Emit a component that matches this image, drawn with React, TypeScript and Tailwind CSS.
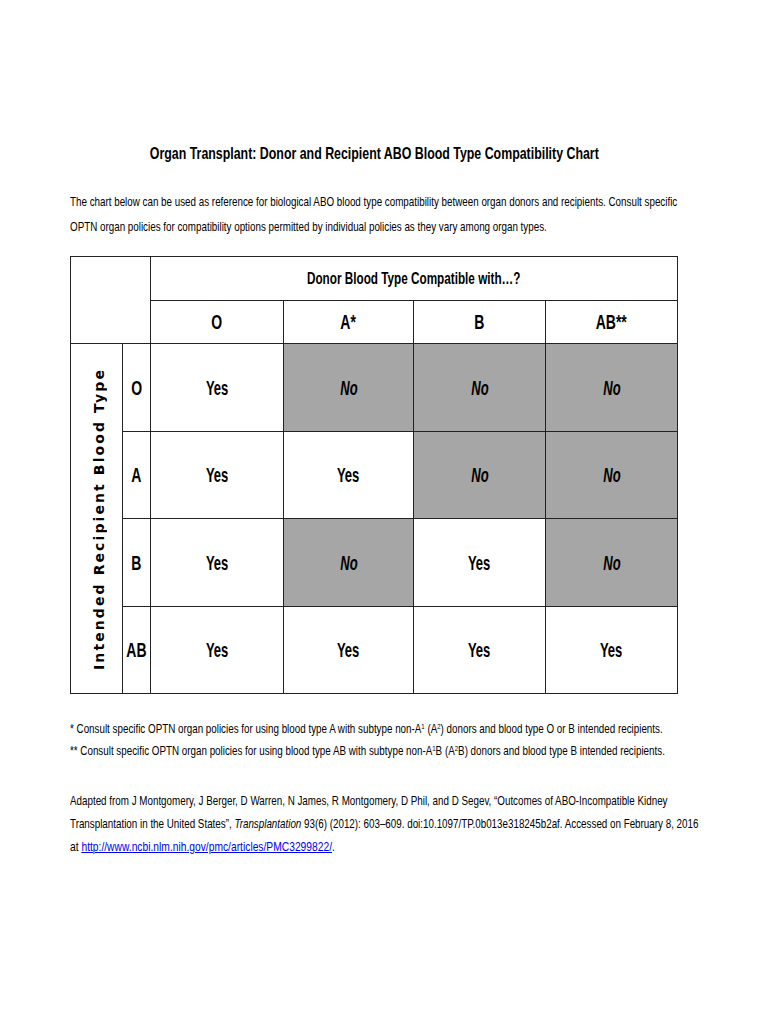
import React from "react";

const rows: { label: string; vals: boolean[] }[] = [
  { label: "O", vals: [true, false, false, false] },
  { label: "A", vals: [true, true, false, false] },
  { label: "B", vals: [true, false, true, false] },
  { label: "AB", vals: [true, true, true, true] },
];

const heads = ["O", "A*", "B", "AB**"];

function Cell({ ok }: { ok: boolean }) {
  return (
    <div
      className={`flex items-center justify-center ${ok ? "bg-white" : "bg-[#a6a6a6]"}`}
    >
      <span
        className={`inline-block whitespace-nowrap text-[21px] font-bold text-black scale-x-[0.62] ${
          ok ? "" : "italic"
        }`}
      >
        {ok ? "Yes" : "No"}
      </span>
    </div>
  );
}

export default function App() {
  return (
    <div className="w-[768px] h-[1024px] bg-white text-black font-['Liberation_Sans',Arial,sans-serif] overflow-hidden">
      <div className="pt-[140px] h-[166px] pr-[20px] leading-[26px] text-center">
        <span className="inline-block whitespace-nowrap text-[16.5px] font-bold scale-x-[0.75]">
          Organ Transplant: Donor and Recipient ABO Blood Type Compatibility Chart
        </span>
      </div>

      <div className="mt-[22.5px] pl-[70px] leading-[25px] text-[13px]">
        <div className="whitespace-nowrap origin-left scale-x-[0.755]">
          The chart below can be used as reference for biological ABO blood type compatibility between organ donors and recipients. Consult specific
        </div>
        <div className="whitespace-nowrap origin-left scale-x-[0.755]">
          OPTN organ policies for compatibility options permitted by individual policies as they vary among organ types.
        </div>
      </div>

      <div className="mt-[17.5px] ml-[70px] w-[608px] grid grid-cols-[51px_27px_132px_129px_131px_131px] grid-rows-[43px_42px_87px_86px_87px_86px] gap-px p-px bg-[#222]">
        <div className="col-span-2 row-span-2 bg-white" />
        <div className="col-span-4 bg-white flex items-center justify-center">
          <span className="inline-block whitespace-nowrap text-[17px] font-bold scale-x-[0.69]">
            Donor Blood Type Compatible with…?
          </span>
        </div>
        {heads.map((h) => (
          <div key={h} className="bg-white flex items-center justify-center">
            <span className="inline-block whitespace-nowrap text-[20px] font-bold scale-x-[0.7]">
              {h}
            </span>
          </div>
        ))}
        <div className="row-span-4 bg-white flex items-center justify-center pl-[5px]">
          <span className="[writing-mode:vertical-rl] rotate-180 whitespace-nowrap font-['DejaVu_Sans',sans-serif] font-bold text-[14px] tracking-[2.1px]">
            Intended Recipient Blood Type
          </span>
        </div>
        {rows.map((r) => (
          <React.Fragment key={r.label}>
            <div className="bg-white flex items-center justify-center">
              <span className="inline-block whitespace-nowrap text-[20px] font-bold scale-x-[0.7]">
                {r.label}
              </span>
            </div>
            {r.vals.map((v, i) => (
              <Cell key={i} ok={v} />
            ))}
          </React.Fragment>
        ))}
      </div>

      <div className="mt-[24px] pl-[70px] leading-[22px] text-[13px]">
        <div className="whitespace-nowrap origin-left scale-x-[0.755]">
          * Consult specific OPTN organ policies for using blood type A with subtype non-A<sup className="text-[8px]">1</sup> (A<sup className="text-[8px]">2</sup>) donors and blood type O or B intended recipients.
        </div>
        <div className="whitespace-nowrap origin-left scale-x-[0.755]">
          ** Consult specific OPTN organ policies for using blood type AB with subtype non-A<sup className="text-[8px]">1</sup>B (A<sup className="text-[8px]">2</sup>B) donors and blood type B intended recipients.
        </div>
      </div>

      <div className="mt-[26.5px] pl-[70px] leading-[23px] text-[13px]">
        <div className="whitespace-nowrap origin-left scale-x-[0.755]">
          Adapted from J Montgomery, J Berger, D Warren, N James, R Montgomery, D Phil, and D Segev, “Outcomes of ABO-Incompatible Kidney
        </div>
        <div className="whitespace-nowrap origin-left scale-x-[0.755]">
          Transplantation in the United States”, <i>Transplantation</i> 93(6) (2012): 603–609. doi:10.1097/TP.0b013e318245b2af. Accessed on February 8, 2016
        </div>
        <div className="whitespace-nowrap origin-left scale-x-[0.79]">
          at <span className="text-[#0000ee] underline">http://www.ncbi.nlm.nih.gov/pmc/articles/PMC3299822/</span>.
        </div>
      </div>
    </div>
  );
}
